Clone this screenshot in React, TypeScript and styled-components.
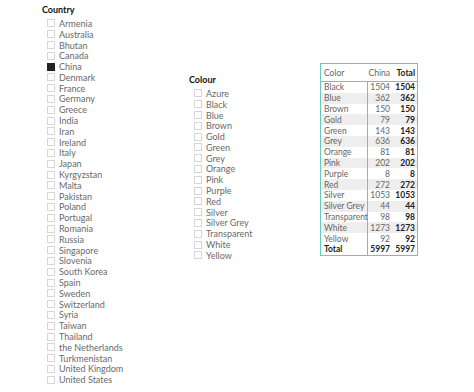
import React from "react";
import styled, { createGlobalStyle } from "styled-components";

const Global = createGlobalStyle`
  html, body { margin: 0; padding: 0; background: #fff; }
  body { font-family: "Segoe UI", Lato, "Noto Sans", sans-serif; }
`;

const Page = styled.div`
  display: flex;
  align-items: flex-start;
  width: 474px;
  height: 392px;
  overflow: hidden;
`;

const Slicer = styled.div<{ $left: number; $top: number; $width: number }>`
  display: flex;
  flex-direction: column;
  margin-left: ${(p) => p.$left}px;
  margin-top: ${(p) => p.$top}px;
  width: ${(p) => p.$width}px;
  flex-shrink: 0;
`;

const Title = styled.div`
  font-size: 9px;
  font-weight: 700;
  color: #111;
  height: 11px;
  line-height: 11px;
  margin-bottom: 3px;
`;

const Item = styled.div`
  display: flex;
  align-items: center;
  height: 10.8px;
  padding-left: 5px;
  font-size: 9px;
  color: #6a6a6a;
  white-space: nowrap;
`;

const Box = styled.span<{ $checked?: boolean }>`
  width: 8px;
  height: 8px;
  box-sizing: border-box;
  border: 1px solid ${(p) => (p.$checked ? "#222" : "#d6d6d6")};
  background: ${(p) => (p.$checked ? "#222" : "#fff")};
  margin-right: 4px;
  flex-shrink: 0;
`;

const TableWrap = styled.div`
  margin-top: 63px;
  width: 98px;
  border: 1px solid #66c9bd;
  box-sizing: border-box;
  flex-shrink: 0;
`;

const Row = styled.div<{ $shade?: boolean; $header?: boolean }>`
  display: grid;
  grid-template-columns: 47px 24px 1fr;
  height: ${(p) => (p.$header ? "17px" : "10.8px")};
  align-items: center;
  background: ${(p) => (p.$shade ? "#eeeeee" : "transparent")};
  border-bottom: ${(p) => (p.$header ? "1px solid #66c9bd" : "none")};
  font-size: 8.5px;
`;

const Cell = styled.div<{ $right?: boolean; $bold?: boolean; $divider?: boolean }>`
  font-weight: ${(p) => (p.$bold ? 700 : 400)};
  color: ${(p) => (p.$bold ? "#222" : "#666")};
  padding: ${(p) => (p.$right ? "0 2px 0 0" : "0 0 0 3px")};
  border-right: ${(p) => (p.$divider ? "1px solid #66c9bd" : "none")};
  height: 100%;
  display: flex;
  align-items: center;
  justify-content: ${(p) => (p.$right ? "flex-end" : "flex-start")};
  white-space: nowrap;
`;

const countries = [
  "Armenia", "Australia", "Bhutan", "Canada", "China", "Denmark", "France",
  "Germany", "Greece", "India", "Iran", "Ireland", "Italy", "Japan", "Kyrgyzstan",
  "Malta", "Pakistan", "Poland", "Portugal", "Romania", "Russia", "Singapore",
  "Slovenia", "South Korea", "Spain", "Sweden", "Switzerland", "Syria", "Taiwan",
  "Thailand", "the Netherlands", "Turkmenistan", "United Kingdom", "United States",
];

const colours = [
  "Azure", "Black", "Blue", "Brown", "Gold", "Green", "Grey", "Orange", "Pink",
  "Purple", "Red", "Silver", "Silver Grey", "Transparent", "White", "Yellow",
];

const data: [string, number][] = [
  ["Black", 1504], ["Blue", 362], ["Brown", 150], ["Gold", 79], ["Green", 143],
  ["Grey", 636], ["Orange", 81], ["Pink", 202], ["Purple", 8], ["Red", 272],
  ["Silver", 1053], ["Silver Grey", 44], ["Transparent", 98], ["White", 1273],
  ["Yellow", 92],
];

export default function App() {
  return (
    <>
      <Global />
      <Page>
        <Slicer $left={42} $top={4} $width={147}>
          <Title>Country</Title>
          {countries.map((c) => (
            <Item key={c}>
              <Box $checked={c === "China"} />
              {c}
            </Item>
          ))}
        </Slicer>
        <Slicer $left={0} $top={74} $width={131}>
          <Title>Colour</Title>
          {colours.map((c) => (
            <Item key={c}>
              <Box />
              {c}
            </Item>
          ))}
        </Slicer>
        <TableWrap>
          <Row $header>
            <Cell>Color</Cell>
            <Cell $right>China</Cell>
            <Cell $right $bold>Total</Cell>
          </Row>
          {data.map(([name, v], i) => (
            <Row key={name} $shade={i % 2 === 1}>
              <Cell $divider>{name}</Cell>
              <Cell $right>{v}</Cell>
              <Cell $right $bold>{v}</Cell>
            </Row>
          ))}
          <Row>
            <Cell $divider $bold>Total</Cell>
            <Cell $right $bold>5997</Cell>
            <Cell $right $bold>5997</Cell>
          </Row>
        </TableWrap>
      </Page>
    </>
  );
}
